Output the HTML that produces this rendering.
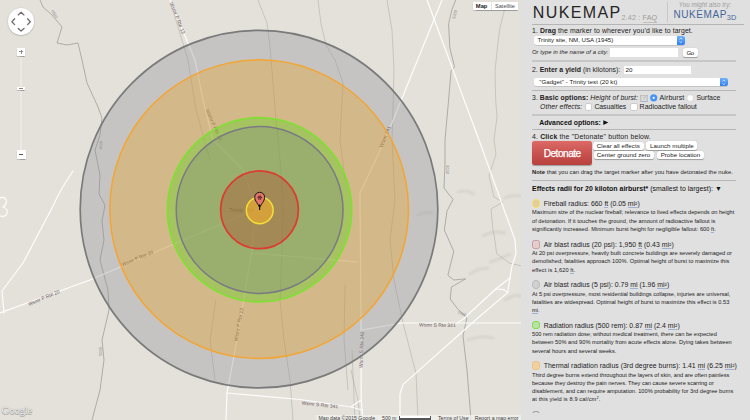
<!DOCTYPE html>
<html><head><meta charset="utf-8"><style>
*{margin:0;padding:0;box-sizing:border-box}
html,body{width:750px;height:420px;overflow:hidden;background:#e0e0e0}
body{position:relative;font-family:"Liberation Sans",sans-serif}
.t{position:absolute;white-space:nowrap}
.r{position:absolute}
.t b{font-weight:bold}
.du{border-bottom:0.5px solid #9db0d8}
sup{font-size:70%;vertical-align:0;position:relative;top:-0.5em}
.sel{position:absolute;background:#fff;border-radius:2px;box-shadow:0 0.4px 0.6px rgba(0,0,0,0.25)}
.st{position:absolute;white-space:nowrap;color:#222}
.step{position:absolute;right:0;top:0;width:7.7px;height:100%;background:linear-gradient(#6fb0fb,#2f7ef2);border-radius:0 2px 2px 0}

.btn{position:absolute;background:#fff;border-radius:2px;box-shadow:0 0.3px 0.8px rgba(0,0,0,0.3)}
.det{position:absolute;border-radius:2.5px;background:linear-gradient(#dd6a66,#c85350 50%,#b8403d);box-shadow:0 0.5px 1px rgba(0,0,0,0.3)}
.radio{position:absolute;width:7.2px;height:7.2px;border-radius:50%;background:#fff;box-shadow:0 0 0 0.4px #b5b5b5}
.radio.on{background:#3c8cf3;box-shadow:none}
.radio.on::after{content:"";position:absolute;left:2.3px;top:2.3px;width:2.6px;height:2.6px;border-radius:50%;background:#fff}
.cb{position:absolute;width:5.8px;height:5.9px;background:#fff;border-radius:1px;box-shadow:0 0 0 0.4px #b5b5b5}
.ic{position:absolute;width:8px;height:8.5px;border:1px solid}
.ctl{position:absolute;background:#fff}
</style></head>
<body>
<div style="position:absolute;left:0;top:0;width:522px;height:420px;overflow:hidden">
<svg width="522" height="420" style="position:absolute;left:0;top:0"><rect x="0" y="0" width="522" height="420" fill="#e4e1db"/><defs><filter id="bl" x="-20%" y="-20%" width="140%" height="140%"><feGaussianBlur stdDeviation="1.3"/></filter></defs><g fill="none" stroke="#9e9b94" stroke-width="2.4" opacity="0.22" stroke-linecap="round" filter="url(#bl)"><path d="M470 274 q8 -6 18 -6"/><path d="M490 262 q10 -3 20 -8"/><path d="M458 192 q8 -3 16 2"/><path d="M505 198 q8 -4 17 -2"/><path d="M483 236 q10 -6 22 -3"/><path d="M505 300 q8 -6 17 -4"/><path d="M418 215 q8 -4 14 -2"/><path d="M468 340 q12 -5 25 -2"/></g><g fill="none" stroke="#a09e98" stroke-width="0.8"><path d="M40 0 L43 7 L52 15 L62 27 L57 43 L67 45 L78 43 L82 60 L87 83 L98 107 L102 118 L100 135 L95 150 L100 175 L99 194 L105 205 L102 221 L104 240 L100 260 L108 290 L109 310 L102 340 L104 360 L100 390 L92 420"/><path d="M455.7 0 L452 9.5 L448.6 23.8 L449.8 47.6 L454.5 66.7 L451 71.4 L448.6 100 L445 140 L445 164 L444 188 L453 199.5 L447 211 L444.3 230 L453.8 251.4 L447.9 275.2 L453.8 280 L465.7 278.8 L451.4 287.1 L450.2 299 L457.4 308.6 L466.9 318 L463 336 L467 370 L471 420"/></g><g fill="none" stroke="#aeaca6" stroke-width="0.55"><path d="M258 0 L267 23 L270 47 L273 83 L276 120 L280 160 L283 200 L282 250 L280 300"/><path d="M318 0 L321 24 L322 28 L326 45 L335 60 L343 83 L340 140 L345 180"/><path d="M174 14 L188 60 L196 110 L210 160"/><path d="M387 0 L392 30 L394 70 L393 110 L392 140 L395 200 L390 240 L394 280 L403 323 L416 373 L418 420"/><path d="M504.5 9.5 L499.8 28.6 L497.4 47.6 L495 71.4 L495.7 100 L497 117 L494 140 L496 154 L489 176 L494 197 L503 202 L491 209 L493 230 L494.3 236 L496.7 253.8 L509.8 263.3 L522 266"/><path d="M280 300 L284 340 L290 380 L293 420"/><path d="M345 285 L344 340 L348 390"/><path d="M351 370 L358 400 L360 420"/><path d="M216 300 L210 340 L215 380"/><path d="M352 350 L355 420"/></g><g fill="none" stroke="#fdfdfc" stroke-width="1.2" stroke-linecap="round" stroke-linejoin="round"><path d="M170 0 L195 60 L203 100 L213 140 L243 170 L255 205 L252 250 L247 280 L237 340 L227 393 L226 420"/><path d="M0 313 L90 280 L180 241.5 L259 208"/><path d="M427 0 L479 140 L515 240 L516 254 L512 266 L510 278 L507.6 292.6 L475.5 320 L403 384.6 L400 394 L400 420"/><path d="M510 278 L495.7 289 L463.6 318.8 L457 323"/><path d="M495.7 289 L504 289.6 L507.6 292.6"/><path d="M442 0 L385 140 L360 193 L361 323 L361.2 400 L363 420"/><path d="M227 393 L300 399.5 L351 407 L361 400 M351 407 L362 410 L363 420"/><path d="M362 330 L402 323 L522 323"/><path d="M252 253 L357 262"/><path d="M73 171 Q60 190 53 206 L23 263 L2 291 L4 313"/><path d="M0 198 C 6 195, 9 203, 3 207 C 10 209, 8 218, 0 216"/></g><text x="169.5" y="3" transform="rotate(68 169.5 3)" font-size="5.0" fill="#6a5858" font-family="Liberation Sans">Wsmr P Rte 13</text><text x="205.5" y="110" transform="rotate(66 205.5 110)" font-size="5.0" fill="#6a5858" font-family="Liberation Sans">Wsmr P Rte 13</text><text x="29" y="306" transform="rotate(-23 29 306)" font-size="5.0" fill="#6a5858" font-family="Liberation Sans">Wsmr P Rte 20</text><text x="122.5" y="266.5" transform="rotate(-23 122.5 266.5)" font-size="5.0" fill="#6a5858" font-family="Liberation Sans">Wsmr P Rte 20</text><text x="237.5" y="341.5" transform="rotate(-80 237.5 341.5)" font-size="5.0" fill="#6a5858" font-family="Liberation Sans">Wsmr P Rte 13</text><text x="301.5" y="404.5" transform="rotate(6 301.5 404.5)" font-size="5.0" fill="#6a5858" font-family="Liberation Sans">Wsmr S Rte 341</text><text x="419" y="326.5" transform="rotate(1 419 326.5)" font-size="5.0" fill="#6a5858" font-family="Liberation Sans">Wsmr S Rte 341</text><text x="362.5" y="368" transform="rotate(-88 362.5 368)" font-size="5.0" fill="#6a5858" font-family="Liberation Sans">Wsmr S Rte 342</text><text x="382.5" y="148" transform="rotate(-68 382.5 148)" font-size="5.0" fill="#6a5858" font-family="Liberation Sans">Wsmr 341</text><text x="449" y="174" transform="rotate(-90 449 174)" font-size="4.0" fill="#8a8782" font-family="Liberation Sans">4500</text><text x="455" y="19" transform="rotate(-75 455 19)" font-size="4.0" fill="#8a8782" font-family="Liberation Sans">5200</text><text x="51" y="11" transform="rotate(58 51 11)" font-size="4.0" fill="#8a8782" font-family="Liberation Sans">4500</text><text x="102" y="150" transform="rotate(-88 102 150)" font-size="4.0" fill="#8a8782" font-family="Liberation Sans">4500</text><text x="102" y="356" transform="rotate(-90 102 356)" font-size="4.0" fill="#8a8782" font-family="Liberation Sans">5000</text><text x="457.5" y="313" transform="rotate(25 457.5 313)" font-size="4.0" fill="#8a8782" font-family="Liberation Sans">5200</text><text x="229.3" y="211.7" transform="rotate(0 229.3 211.7)" font-size="5.3" fill="#4a3a28" font-family="Liberation Sans">Trinity Site</text><circle cx="259.0" cy="209.1" r="178.8" fill="rgb(138,138,142)" fill-opacity="0.32" stroke="#7a7a7a" stroke-width="1.7"/><circle cx="259.15" cy="209.15" r="149.3" fill="rgb(241,159,6)" fill-opacity="0.3" stroke="#f3a533" stroke-width="1.5"/><circle cx="259.55" cy="209.75" r="92.2" fill="rgb(63,217,9)" fill-opacity="0.3" stroke="#7fe033" stroke-width="1.7"/><circle cx="259.6" cy="210.0" r="83.4" fill="rgb(125,129,140)" fill-opacity="0.3" stroke="#7a7a84" stroke-width="1.5"/><circle cx="259.5" cy="209.8" r="38.9" fill="rgb(182,49,32)" fill-opacity="0.3" stroke="#dd3b30" stroke-width="1.7"/><circle cx="259.75" cy="210.3" r="13.4" fill="rgb(245,175,41)" fill-opacity="0.6" stroke="#f1e03c" stroke-width="1.5"/><path d="M259.2 206.8 C 258.4 204, 254.7 201.2, 254.7 197.3 A5 5 0 1 1 264.7 197.3 C 264.7 201.2, 261.0 204, 260.2 206.8 Z" fill="#e0776f" stroke="#1e1414" stroke-width="1"/><g fill="#5e2420"><circle cx="261.30" cy="197.60" r="0.75"/><circle cx="260.50" cy="198.99" r="0.75"/><circle cx="258.90" cy="198.99" r="0.75"/><circle cx="258.10" cy="197.60" r="0.75"/><circle cx="258.90" cy="196.21" r="0.75"/><circle cx="260.50" cy="196.21" r="0.75"/><circle cx="259.7" cy="197.60000000000002" r="0.9"/></g><line x1="259.59999999999997" y1="204.5" x2="259.59999999999997" y2="209.9" stroke="#111" stroke-width="1.2"/></svg>
<div class="ctl" style="left:7.8px;top:8.4px;width:26.6px;height:26.6px;border-radius:50%;box-shadow:0 0.5px 1.5px rgba(0,0,0,0.3)"></div><svg style="position:absolute;left:0;top:0" width="60" height="40"><g fill="none" stroke="#707070" stroke-width="1.35" stroke-linecap="round" stroke-linejoin="round"><path d="M18.2 14.9 L21.1 12.3 L24 14.9"/><path d="M18.2 28.5 L21.1 31.1 L24 28.5"/><path d="M14.6 18.8 L11.9 21.7 L14.6 24.6"/><path d="M27.6 18.8 L30.3 21.7 L27.6 24.6"/></g></svg><div class="r" style="left:20px;top:55px;width:1.8000000000000007px;height:95px;background:#ebe9e5"></div>
<div class="ctl" style="left:16.9px;top:47.9px;width:8.5px;height:7.8px;box-shadow:0 0.5px 1px rgba(0,0,0,0.3)"></div><div class="r" style="left:19px;top:51.4px;width:4.199999999999999px;height:0.8999999999999986px;background:#8a8a8a"></div>
<div class="r" style="left:20.65px;top:49.6px;width:0.9000000000000021px;height:4.5px;background:#8a8a8a"></div>
<div class="ctl" style="left:16.7px;top:86.7px;width:8.3px;height:3.3px;box-shadow:0 0.5px 1px rgba(0,0,0,0.3)"></div><div class="r" style="left:19px;top:88px;width:4px;height:0.9000000000000057px;background:#888"></div>
<div class="ctl" style="left:16.5px;top:149.5px;width:9.1px;height:9.6px;box-shadow:0 0.5px 1px rgba(0,0,0,0.3)"></div><div class="r" style="left:18.9px;top:153.9px;width:4.100000000000001px;height:1.0999999999999943px;background:#555"></div>
<div class="ctl" style="left:472.6px;top:1.6px;width:45.6px;height:8.4px;box-shadow:0 0.5px 1px rgba(0,0,0,0.3)"></div><div class="r" style="left:491px;top:1.6px;width:0.6000000000000227px;height:8.4px;background:#e5e5e5"></div>
<div class="t" id="t49" style="left:475.80px;top:4.00px;font-size:5.8px;line-height:5.8px;color:#222"><b>Map</b></div>
<div class="t" id="t50" style="left:495.00px;top:4.00px;font-size:5.6px;line-height:5.6px;color:#4a4a4a">Satellite</div>
<div class="r" style="left:316.4px;top:414.6px;width:205.60000000000002px;height:5.399999999999977px;background:rgba(240,240,238,0.75)"></div>
<div class="t" id="t51" style="left:318.50px;top:416.00px;font-size:5.2px;line-height:5.2px;color:#444">Map data ©2015 Google</div>
<div class="t" id="t52" style="left:382.00px;top:416.00px;font-size:5.2px;line-height:5.2px;color:#444">500 m</div>
<div class="r" style="left:399.3px;top:415.6px;width:31.399999999999977px;height:2.7999999999999545px;background:#fff"></div>
<div class="r" style="left:399.3px;top:418.4px;width:31.399999999999977px;height:1.2000000000000455px;background:#555"></div>
<div class="r" style="left:399.3px;top:416.2px;width:1.099999999999966px;height:3.400000000000034px;background:#555"></div>
<div class="r" style="left:429.6px;top:416.2px;width:1.099999999999966px;height:3.400000000000034px;background:#555"></div>
<div class="t" id="t53" style="left:438.00px;top:416.00px;font-size:5.2px;line-height:5.2px;color:#444">Terms of Use</div>
<div class="t" id="t54" style="left:474.70px;top:416.00px;font-size:5.2px;line-height:5.2px;color:#444">Report a map error</div>
<div class="t" style="left:1.5px;top:405.2px;font-family:Liberation Serif;font-size:11px;line-height:11px;color:#fafafa;letter-spacing:-0.3px;text-shadow:0 0 0.8px rgba(0,0,0,0.55),0 0.5px 0.5px rgba(0,0,0,0.3)">Google</div>
</div>
<div class="r" style="left:521px;top:0px;width:229px;height:420px;background:#e0e0e0"></div>
<div class="t" id="t1" style="left:532.80px;top:5.00px;font-size:16px;line-height:16px;letter-spacing:1.394px;color:#262626">NUKEMAP</div>
<div class="t" id="t2" style="left:621.60px;top:14.00px;font-size:7.2px;line-height:7.2px;letter-spacing:0.136px;color:#a0a0a0">2.42 : <span style="color:#9a9a9a;border-bottom:0.6px solid #c0c0c0">FAQ</span></div>
<div class="r" style="left:666.5px;top:2px;width:1.0px;height:20px;background:#c9c9c9"></div>
<div class="t" id="t3" style="left:678.80px;top:2.00px;font-size:6.3px;line-height:6.3px;letter-spacing:0.027px;font-style:italic;color:#9c9c9c">You might also try:</div>
<div class="t" id="t4" style="left:673.50px;top:10.00px;font-size:10px;line-height:10px;letter-spacing:0.558px;color:#46669a">NUKEMAP</div>
<div class="t" id="t5" style="left:726.80px;top:14.00px;font-size:7.4px;line-height:7.4px;color:#46669a">3D</div>
<div class="r" style="left:532px;top:24px;width:212.20000000000005px;height:1px;background:#b5b5b5"></div>
<div class="t" id="t6" style="left:532.00px;top:28.00px;font-size:6.9px;line-height:6.9px;letter-spacing:0.096px;color:#222">1. <b>Drag</b> the marker to wherever you’d like to target.</div>
<div class="sel" style="left:533.5px;top:36px;width:151px;height:8.5px"><div class="step"><svg width="8" height="9" style="position:absolute;left:0;top:0"><path d="M2.5 3.3 L3.85 2 L5.2 3.3 M2.5 5.4 L3.85 6.7 L5.2 5.4" fill="none" stroke="#fff" stroke-width="0.7"/></svg></div></div>
<div class="t" id="t7" style="left:537.60px;top:37.00px;font-size:6.15px;line-height:6.15px;letter-spacing:-0.007px;color:#222">Trinity site, NM, USA (1945)</div>
<div class="t" id="t8" style="left:532.00px;top:50.00px;font-size:5.85px;line-height:5.85px;letter-spacing:0.055px;font-style:italic;color:#222">Or type in the name of a city:</div>
<div class="r" style="left:610px;top:48px;width:68px;height:8.5px;background:#fff;"></div>
<div class="btn" style="left:682.8px;top:47.7px;width:15.7px;height:9px"></div>
<div class="t" id="t9" style="left:686.60px;top:50.00px;font-size:6.2px;line-height:6.2px;letter-spacing:-0.591px;color:#222">Go</div>
<div class="r" style="left:532px;top:60px;width:204.29999999999995px;height:2px;background:#c7c7c7"></div>
<div class="t" id="t10" style="left:532.00px;top:67.00px;font-size:6.9px;line-height:6.9px;letter-spacing:0.019px;color:#222">2. <b>Enter a yield</b> (in kilotons):</div>
<div class="r" style="left:624px;top:66px;width:67px;height:8.299999999999997px;background:#fff"></div>
<div class="t" id="t11" style="left:625.50px;top:67.00px;font-size:6.2px;line-height:6.2px;color:#222">20</div>
<div class="sel" style="left:533.5px;top:78.2px;width:194px;height:7.9px"><div class="step"><svg width="8" height="9" style="position:absolute;left:0;top:0"><path d="M2.5 3.3 L3.85 2 L5.2 3.3 M2.5 5.4 L3.85 6.7 L5.2 5.4" fill="none" stroke="#fff" stroke-width="0.7"/></svg></div></div>
<div class="t" id="t12" style="left:539.20px;top:79.00px;font-size:6.15px;line-height:6.15px;letter-spacing:0.033px;color:#222">"Gadget" - Trinity test (20 kt)</div>
<div class="r" style="left:532px;top:90px;width:204.29999999999995px;height:1px;background:#b5b5b5"></div>
<div class="t" id="t13" style="left:532.00px;top:95.00px;font-size:6.9px;line-height:6.9px;letter-spacing:0.065px;color:#222">3. <b>Basic options:</b> <i>Height of burst:</i> <span style="color:#9a9a9a">[<span class="du">?</span>]</span></div>
<svg style="position:absolute;left:648px;top:92px" width="12" height="12"><circle cx="5.7" cy="5.8" r="3.6" fill="#4495f5"/><circle cx="5.7" cy="5.8" r="1.15" fill="#fff"/></svg>
<div class="t" id="t14" style="left:659.60px;top:94.00px;font-size:7.0px;line-height:7.0px;letter-spacing:0.079px;color:#222">Airburst</div>
<svg style="position:absolute;left:685px;top:92px" width="12" height="12"><circle cx="5.2" cy="6" r="3.35" fill="#fff" stroke="#c4c4c4" stroke-width="0.5"/></svg>
<div class="t" id="t15" style="left:696.40px;top:95.00px;font-size:6.95px;line-height:6.95px;letter-spacing:-0.010px;color:#222">Surface</div>
<div class="t" id="t16" style="left:540.00px;top:104.00px;font-size:6.9px;line-height:6.9px;letter-spacing:0.071px;color:#222"><i>Other effects:</i></div>
<div class="cb" style="left:585.6px;top:103.8px"></div>
<div class="t" id="t17" style="left:594.40px;top:104.00px;font-size:6.85px;line-height:6.85px;letter-spacing:-0.010px;color:#222">Casualties</div>
<div class="cb" style="left:630.8px;top:103.8px"></div>
<div class="t" id="t18" style="left:639.60px;top:103.00px;font-size:7.0px;line-height:7.0px;letter-spacing:-0.002px;color:#222">Radioactive fallout</div>
<div class="r" style="left:532px;top:114px;width:204.29999999999995px;height:2px;background:#c6c6c6"></div>
<div class="t" id="t19" style="left:539.20px;top:120.00px;font-size:6.85px;line-height:6.85px;letter-spacing:-0.000px;color:#111"><b>Advanced options:</b></div>
<svg style="position:absolute;left:603px;top:120px" width="6" height="6"><path d="M0.3 0.3 L5.4 2.6 L0.3 4.9 Z" fill="#111"/></svg>
<div class="r" style="left:532px;top:129px;width:204.29999999999995px;height:1px;background:#b5b5b5"></div>
<div class="t" id="t20" style="left:532.00px;top:134.00px;font-size:6.9px;line-height:6.9px;letter-spacing:0.162px;color:#222">4. <b>Click</b> the "Detonate" button below.</div>
<div class="det" style="left:532px;top:141.2px;width:60.3px;height:24.3px"></div>
<div class="t" id="t21" style="left:543.70px;top:149.00px;font-size:10.2px;line-height:10.2px;letter-spacing:-0.544px;color:#fff;-webkit-text-stroke:0.25px #fff">Detonate</div>
<div class="btn" style="left:593.3px;top:141.5px;width:50.3px;height:8.0px"></div>
<div class="t" id="t22" style="left:596.80px;top:143.00px;font-size:6.2px;line-height:6.2px;letter-spacing:0.029px;color:#222">Clear all effects</div>
<div class="btn" style="left:646px;top:141.3px;width:51.2px;height:8.3px"></div>
<div class="t" id="t23" style="left:650.00px;top:143.00px;font-size:6.2px;line-height:6.2px;letter-spacing:0.033px;color:#222">Launch multiple</div>
<div class="btn" style="left:593.5px;top:151px;width:60.2px;height:8.1px"></div>
<div class="t" id="t24" style="left:596.80px;top:152.00px;font-size:6.2px;line-height:6.2px;letter-spacing:0.009px;color:#222">Center ground zero</div>
<div class="btn" style="left:656.9px;top:150.9px;width:47.5px;height:8.3px"></div>
<div class="t" id="t25" style="left:660.70px;top:152.00px;font-size:6.2px;line-height:6.2px;letter-spacing:-0.001px;color:#222">Probe location</div>
<div class="t" id="t26" style="left:532.00px;top:170.00px;font-size:5.85px;line-height:5.85px;letter-spacing:0.040px;color:#222"><b>Note</b> that you can drag the target marker after you have detonated the nuke.</div>
<div class="r" style="left:532px;top:180px;width:204.29999999999995px;height:1px;background:#b5b5b5"></div>
<div class="t" id="t27" style="left:532.00px;top:186.00px;font-size:6.95px;line-height:6.95px;letter-spacing:0.015px;color:#111"><b>Effects radii for 20 kiloton airburst*</b> (smallest to largest): ▼</div>
<div class="ic" style="left:532px;top:199.2px;background:#e7caa0;border-color:#f2e25e;border-radius:50%"></div>
<div class="t" id="t28" style="left:543.70px;top:201.00px;font-size:6.9px;line-height:6.9px;letter-spacing:0.008px;color:#222">Fireball radius: 660 <span class="du">ft</span> (0.05 <span class="du">mi²</span>)</div>
<div class="t" id="t29" style="left:532.00px;top:210.00px;font-size:5.65px;line-height:5.65px;letter-spacing:-0.010px;color:#222">Maximum size of the nuclear fireball; relevance to lived effects depends on height</div>
<div class="t" id="t30" style="left:532.00px;top:219.00px;font-size:5.65px;line-height:5.65px;letter-spacing:0.019px;color:#222">of detonation. If it touches the ground, the amount of radioactive fallout is</div>
<div class="t" id="t31" style="left:532.00px;top:227.00px;font-size:5.65px;line-height:5.65px;letter-spacing:0.034px;color:#222">significantly increased. Minimum burst height for negligible fallout: 600 <span class="du">ft</span>.</div>
<div class="ic" style="left:532px;top:240px;background:#e8cccc;border-color:#bf9f9f;border-radius:2.5px"></div>
<div class="t" id="t32" style="left:543.70px;top:242.00px;font-size:6.9px;line-height:6.9px;letter-spacing:0.030px;color:#222">Air blast radius (20 psi): 1,950 <span class="du">ft</span> (0.43 <span class="du">mi²</span>)</div>
<div class="t" id="t33" style="left:532.00px;top:251.00px;font-size:5.65px;line-height:5.65px;letter-spacing:-0.003px;color:#222">At 20 psi overpressure, heavily built concrete buildings are severely damaged or</div>
<div class="t" id="t34" style="left:532.00px;top:259.00px;font-size:5.65px;line-height:5.65px;letter-spacing:0.022px;color:#222">demolished; fatalities approach 100%. Optimal height of burst to maximize this</div>
<div class="t" id="t35" style="left:532.00px;top:268.00px;font-size:5.65px;line-height:5.65px;letter-spacing:0.110px;color:#222">effect is 1,620 <span class="du">ft</span>.</div>
<div class="ic" style="left:532px;top:280.3px;background:#d0d0d0;border-color:#b9b9b9;border-radius:50%"></div>
<div class="t" id="t36" style="left:543.70px;top:282.00px;font-size:6.9px;line-height:6.9px;letter-spacing:0.024px;color:#222">Air blast radius (5 psi): 0.79 <span class="du">mi</span> (1.96 <span class="du">mi²</span>)</div>
<div class="t" id="t37" style="left:532.00px;top:292.00px;font-size:5.65px;line-height:5.65px;letter-spacing:-0.002px;color:#222">At 5 psi overpressure, most residential buildings collapse, injuries are universal,</div>
<div class="t" id="t38" style="left:532.00px;top:300.00px;font-size:5.65px;line-height:5.65px;letter-spacing:0.014px;color:#222">fatalities are widespread. Optimal height of burst to maximize this effect is 0.53</div>
<div class="t" id="t39" style="left:532.00px;top:308.00px;font-size:5.65px;line-height:5.65px;color:#222"><span class="du">mi</span>.</div>
<div class="ic" style="left:532px;top:320.6px;background:#b9e1a9;border-color:#80e040;border-radius:3px"></div>
<div class="t" id="t40" style="left:543.70px;top:323.00px;font-size:6.9px;line-height:6.9px;letter-spacing:0.010px;color:#222">Radiation radius (500 rem): 0.87 <span class="du">mi</span> (2.4 <span class="du">mi²</span>)</div>
<div class="t" id="t41" style="left:532.00px;top:332.00px;font-size:5.65px;line-height:5.65px;letter-spacing:0.010px;color:#222">500 rem radiation dose; without medical treatment, there can be expected</div>
<div class="t" id="t42" style="left:532.00px;top:340.00px;font-size:5.65px;line-height:5.65px;letter-spacing:0.023px;color:#222">between 50% and 90% mortality from acute effects alone. Dying takes between</div>
<div class="t" id="t43" style="left:532.00px;top:349.00px;font-size:5.65px;line-height:5.65px;letter-spacing:0.019px;color:#222">several hours and several weeks.</div>
<div class="ic" style="left:532px;top:361.4px;background:#efd2a2;border-color:#f0c080;border-radius:3px"></div>
<div class="t" id="t44" style="left:543.70px;top:363.00px;font-size:6.9px;line-height:6.9px;letter-spacing:0.031px;color:#222">Thermal radiation radius (3rd degree burns): 1.41 <span class="du">mi</span> (6.25 <span class="du">mi²</span>)</div>
<div class="t" id="t45" style="left:532.00px;top:373.00px;font-size:5.65px;line-height:5.65px;letter-spacing:0.001px;color:#222">Third degree burns extend throughout the layers of skin, and are often painless</div>
<div class="t" id="t46" style="left:532.00px;top:381.00px;font-size:5.65px;line-height:5.65px;letter-spacing:-0.022px;color:#222">because they destroy the pain nerves. They can cause severe scarring or</div>
<div class="t" id="t47" style="left:532.00px;top:389.00px;font-size:5.65px;line-height:5.65px;letter-spacing:0.020px;color:#222">disablement, and can require amputation. 100% probability for 3rd degree burns</div>
<div class="t" id="t48" style="left:532.00px;top:397.00px;font-size:5.65px;line-height:5.65px;letter-spacing:0.121px;color:#222">at this yield is 8.9 cal/cm<sup>2</sup>.</div>
<div style="position:absolute;left:532px;top:410.6px;width:8px;height:2.2px;overflow:hidden"><div class="ic" style="left:0;top:0;background:#e0e0e0;border-color:#9a9a9a;border-radius:50%"></div></div>

</body></html>
